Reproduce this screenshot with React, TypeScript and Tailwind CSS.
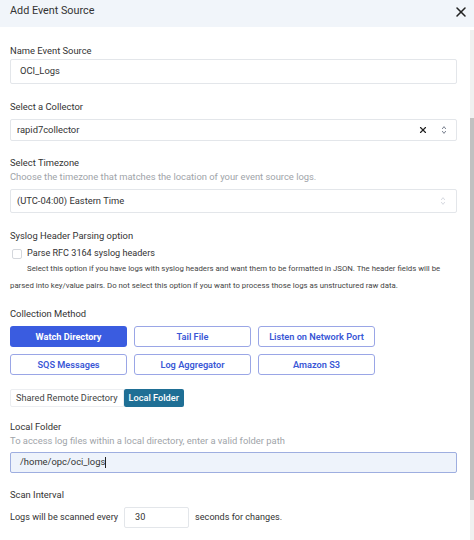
import { X } from 'lucide-react'

function Chevrons({ faded }: { faded?: boolean }) {
  return (
    <svg width="6" height="10" viewBox="0 0 6 10" className={faded ? 'text-gray-300' : 'text-gray-500'}>
      <path d="M1.2 4 L3 1.6 L4.8 4" fill="none" stroke="currentColor" strokeWidth="0.9" />
      <path d="M1.2 6 L3 8.4 L4.8 6" fill="none" stroke="currentColor" strokeWidth="0.9" />
    </svg>
  )
}

const methods = [
  'Watch Directory',
  'Tail File',
  'Listen on Network Port',
  'SQS Messages',
  'Log Aggregator',
  'Amazon S3',
]

export default function App() {
  return (
    <div
      className="relative w-[474px] h-[540px] overflow-hidden bg-white text-[#333]"
      style={{ fontFamily: 'Roboto, "Liberation Sans", sans-serif' }}
    >
      {/* header */}
      <div className="flex items-start justify-between h-[27px] bg-[#f1f5fa] pl-[10px] pr-[5px] pt-[4px]">
        <span className="text-[10.8px] leading-[14px] text-[#333]">Add Event Source</span>
        <X size={16} strokeWidth={2.3} className="text-[#222]" />
      </div>

      {/* scrollbar */}
      <div className="absolute right-0 top-[30px] bottom-0 w-[4px] bg-[#f0f0f0]">
        <div className="mt-[88px] h-[382px] w-full bg-[#c1c1c1]" />
      </div>

      <div className="pl-[10px] pr-[17px] pt-[17px] text-[9.4px]">
        {/* name */}
        <div className="leading-[13px] mb-[2px]">Name Event Source</div>
        <div className="h-[25px] border border-[#e3e6ea] rounded-[2px] flex items-center pl-[9px]">
          OCI_Logs
        </div>

        {/* collector */}
        <div className="leading-[13px] mt-[16px] mb-[6px]">Select a Collector</div>
        <div className="h-[22px] border border-[#e3e6ea] rounded-[2px] flex items-center pl-[6px] pr-[9px]">
          <span className="flex-1">rapid7collector</span>
          <X size={10} strokeWidth={2.8} className="text-[#222] mr-[13px]" />
          <Chevrons />
        </div>

        {/* timezone */}
        <div className="leading-[13px] mt-[15px]">Select Timezone</div>
        <div className="leading-[13px] mt-[1px] mb-[6px] text-[#a0a4a9]">
          Choose the timezone that matches the location of your event source logs.
        </div>
        <div className="h-[24px] border border-[#e3e6ea] rounded-[2px] flex items-center pl-[6px] pr-[10px]">
          <span className="flex-1">(UTC-04:00) Eastern Time</span>
          <Chevrons faded />
        </div>

        {/* syslog */}
        <div className="leading-[13px] mt-[16px]">Syslog Header Parsing option</div>
        <div className="flex items-center h-[13px] mt-[5px] ml-[2px]">
          <div className="w-[10px] h-[10px] border border-[#d4d7dc] rounded-[2px] mr-[5px]" />
          <span className="text-[9.1px]">Parse RFC 3164 syslog headers</span>
        </div>
        <div className="text-[7.8px] leading-[17px] text-[#444] whitespace-nowrap">
          <div className="pl-[17px]">
            Select this option if you have logs with syslog headers and want them to be formatted in JSON. The header fields will be
          </div>
          <div>
            parsed into key/value pairs. Do not select this option if you want to process those logs as unstructured raw data.
          </div>
        </div>

        {/* collection method */}
        <div className="leading-[13px] mt-[13px] mb-[6px]">Collection Method</div>
        <div className="grid grid-cols-[117px_117px_117px] gap-[7px]">
          {methods.map((m, i) => (
            <div
              key={m}
              className={
                i === 0
                  ? 'h-[21px] rounded-[3px] bg-[#3a5ce0] text-white font-bold flex items-center justify-center text-[9.2px]'
                  : 'h-[21px] rounded-[3px] border border-[#9aa6e6] text-[#3a57d6] font-semibold flex items-center justify-center text-[9.2px]'
              }
            >
              {m}
            </div>
          ))}
        </div>

        {/* directory toggle */}
        <div className="flex mt-[14px] h-[18px] text-[9.2px]">
          <div className="border border-[#eceef1] rounded-l-[2px] px-[5px] flex items-center text-[#444]">
            Shared Remote Directory
          </div>
          <div className="bg-[#1f6f95] text-white rounded-[2px] px-[5px] flex items-center font-medium">
            Local Folder
          </div>
        </div>

        {/* local folder */}
        <div className="leading-[13px] mt-[13px]">Local Folder</div>
        <div className="leading-[13px] mt-[1px] mb-[5px] text-[#a0a4a9]">
          To access log files within a local directory, enter a valid folder path
        </div>
        <div className="h-[21px] border border-[#9eaee0] bg-[#eef3fb] rounded-[2px] flex items-center pl-[9px]">
          /home/opc/oci_logs
          <span className="inline-block w-[1px] h-[11px] bg-[#222]" />
        </div>

        {/* scan interval */}
        <div className="leading-[13px] mt-[15px]">Scan Interval</div>
        <div className="flex items-center mt-[6px] text-[9.1px]">
          <span>Logs will be scanned every</span>
          <div className="w-[65px] h-[21px] border border-[#e3e6ea] rounded-[2px] ml-[6px] mr-[6px] flex items-center pl-[10px]">
            30
          </div>
          <span>seconds for changes.</span>
        </div>
      </div>
    </div>
  )
}
